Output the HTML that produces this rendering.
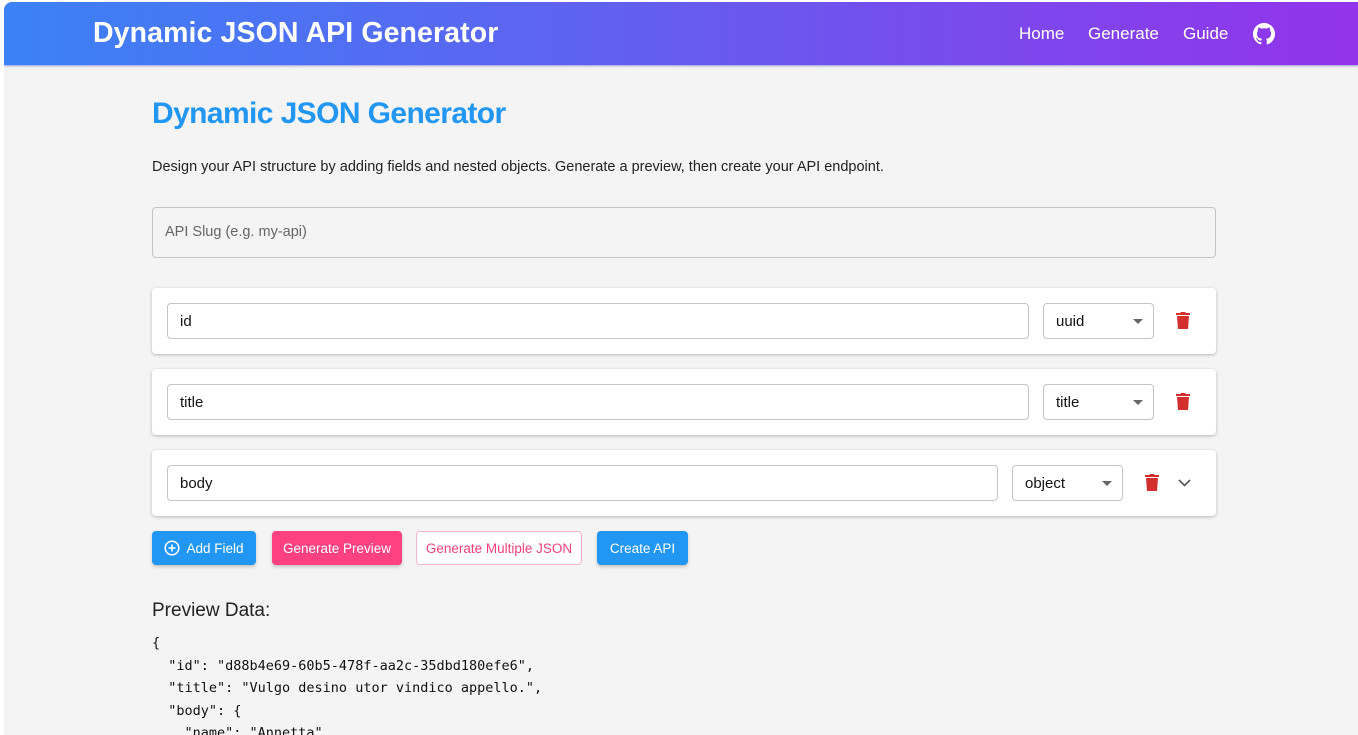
<!DOCTYPE html>
<html><head><meta charset="utf-8"><style>
*{box-sizing:border-box;margin:0;padding:0}
html,body{width:1358px;height:735px;overflow:hidden;background:#fff;font-family:"Liberation Sans",Arial,sans-serif}
.page{position:absolute;left:4px;top:2px;width:1354px;height:733px;background:#f4f4f4;border-radius:8px 0 0 0;overflow:hidden}
.hdr{position:absolute;left:0;top:0;width:100%;height:63px;background:linear-gradient(90deg,#3b82f6,#6160ef 45%,#9333ea);box-shadow:0 1px 2px rgba(60,60,200,.5)}
.brand{position:absolute;left:89px;top:15px;color:#fff;font-weight:bold;font-size:28.5px;letter-spacing:0.1px}
.nav{position:absolute;top:22px;color:#fff;font-size:17px}
h1{position:absolute;left:148px;top:95px;color:#2196f3;font-size:30px;font-weight:bold;letter-spacing:-0.6px}
.desc{position:absolute;left:148px;top:157px;font-size:14.5px;color:#222}
.slug{position:absolute;left:148px;top:205px;width:1064px;height:51px;border:1px solid #c4c4c4;border-radius:4px;padding:16px 12px;font-size:14.5px;color:#666;background:#f4f4f4}
.card{position:absolute;left:148px;width:1064px;height:66px;background:#fff;border-radius:4px;box-shadow:0 1px 3px rgba(0,0,0,.25)}
.inp{position:absolute;top:15px;height:36px;border:1px solid #c4c4c4;border-radius:4px;padding:9px 12px;font-size:15px;color:#111}
.sel{position:absolute;top:15px;width:111px;height:36px;border:1px solid #c4c4c4;border-radius:4px;padding:9px 12px;font-size:15px;color:#111}
.sel:after{content:"";position:absolute;right:10px;top:15px;border-left:5px solid transparent;border-right:5px solid transparent;border-top:5px solid #666}
.trash{position:absolute;top:23px}
.btn{position:absolute;top:529px;height:34px;border-radius:4px;font-size:13.5px;color:#fff;text-align:center;line-height:35px;box-shadow:0 2px 3px rgba(0,0,0,.2)}
.pv{position:absolute;left:148px;top:598px;font-size:19px;color:#222}
pre{position:absolute;left:148px;top:630px;font-family:"DejaVu Sans Mono",monospace;font-size:13.5px;line-height:22.5px;color:#111}
</style></head><body>
<div class="page">
<div class="hdr">
<div class="brand">Dynamic JSON API Generator</div>
<div class="nav" style="left:1015px">Home</div>
<div class="nav" style="left:1084px">Generate</div>
<div class="nav" style="left:1179px">Guide</div>
<svg style="position:absolute;left:1249px;top:21px" width="22" height="22" viewBox="0 0 16 16" fill="#fff"><path d="M8 0C3.58 0 0 3.58 0 8c0 3.54 2.290 6.53 5.470 7.59.4.07.55-.17.55-.38 0-.19-.01-.82-.01-1.490-2.010.37-2.530-.49-2.690-.94-.09-.23-.48-.94-.82-1.130-.28-.15-.68-.52-.01-.53.63-.01 1.080.58 1.230.82.72 1.210 1.870.87 2.330.66.07-.52.28-.87.51-1.070-1.780-.2-3.640-.89-3.640-3.950 0-.87.31-1.590.82-2.150-.08-.2-.36-1.020.08-2.120 0 0 .67-.21 2.200.82.64-.18 1.320-.27 2-.27.68 0 1.360.09 2 .27 1.530-1.040 2.200-.82 2.200-.82.44 1.100.16 1.920.08 2.120.51.56.82 1.270.82 2.150 0 3.070-1.870 3.750-3.650 3.950.29.25.54.73.54 1.480 0 1.070-.01 1.930-.01 2.200 0 .21.15.46.55.38A8.013 8.013 0 0016 8c0-4.420-3.580-8-8-8z"/></svg>
</div>
<h1>Dynamic JSON Generator</h1>
<div class="desc">Design your API structure by adding fields and nested objects. Generate a preview, then create your API endpoint.</div>
<div class="slug">API Slug (e.g. my-api)</div>

<div class="card" style="top:286px">
<div class="inp" style="left:15px;width:862px">id</div>
<div class="sel" style="left:891px">uuid</div>
<svg class="trash" style="left:1023px" width="16" height="18" viewBox="0 0 14 18" fill="#d32f2f"><path d="M1 5h12l-1 13H2z M0 2h4l1-1h4l1 1h4v2H0z"/></svg>
</div>
<div class="card" style="top:367px">
<div class="inp" style="left:15px;width:862px">title</div>
<div class="sel" style="left:891px">title</div>
<svg class="trash" style="left:1023px" width="16" height="18" viewBox="0 0 14 18" fill="#d32f2f"><path d="M1 5h12l-1 13H2z M0 2h4l1-1h4l1 1h4v2H0z"/></svg>
</div>
<div class="card" style="top:448px">
<div class="inp" style="left:15px;width:831px">body</div>
<div class="sel" style="left:860px">object</div>
<svg class="trash" style="left:992px" width="16" height="18" viewBox="0 0 14 18" fill="#d32f2f"><path d="M1 5h12l-1 13H2z M0 2h4l1-1h4l1 1h4v2H0z"/></svg>
<svg style="position:absolute;left:1026px;top:29px" width="13" height="8" viewBox="0 0 13 8"><path d="M1 1l5.5 5.5L12 1" stroke="#555" stroke-width="1.6" fill="none"/></svg>
</div>

<div class="btn" style="left:148px;width:104px;background:#2196f3;padding-left:22px">Add Field
<svg style="position:absolute;left:12px;top:9px" width="16" height="16" viewBox="0 0 16 16"><circle cx="8" cy="8" r="6.8" stroke="#fff" stroke-width="1.5" fill="none"/><path d="M8 4.5v7M4.5 8h7" stroke="#fff" stroke-width="1.5"/></svg></div>
<div class="btn" style="left:268px;width:130px;background:#ff4081">Generate Preview</div>
<div class="btn" style="left:412px;width:166px;background:#fff;color:#f0407e;border:1px solid #f7b4cb;box-shadow:none;line-height:33px">Generate Multiple JSON</div>
<div class="btn" style="left:593px;width:91px;background:#2196f3">Create API</div>

<div class="pv">Preview Data:</div>
<pre>{
  "id": "d88b4e69-60b5-478f-aa2c-35dbd180efe6",
  "title": "Vulgo desino utor vindico appello.",
  "body": {
    "name": "Annetta"</pre>
</div>
</body></html>
